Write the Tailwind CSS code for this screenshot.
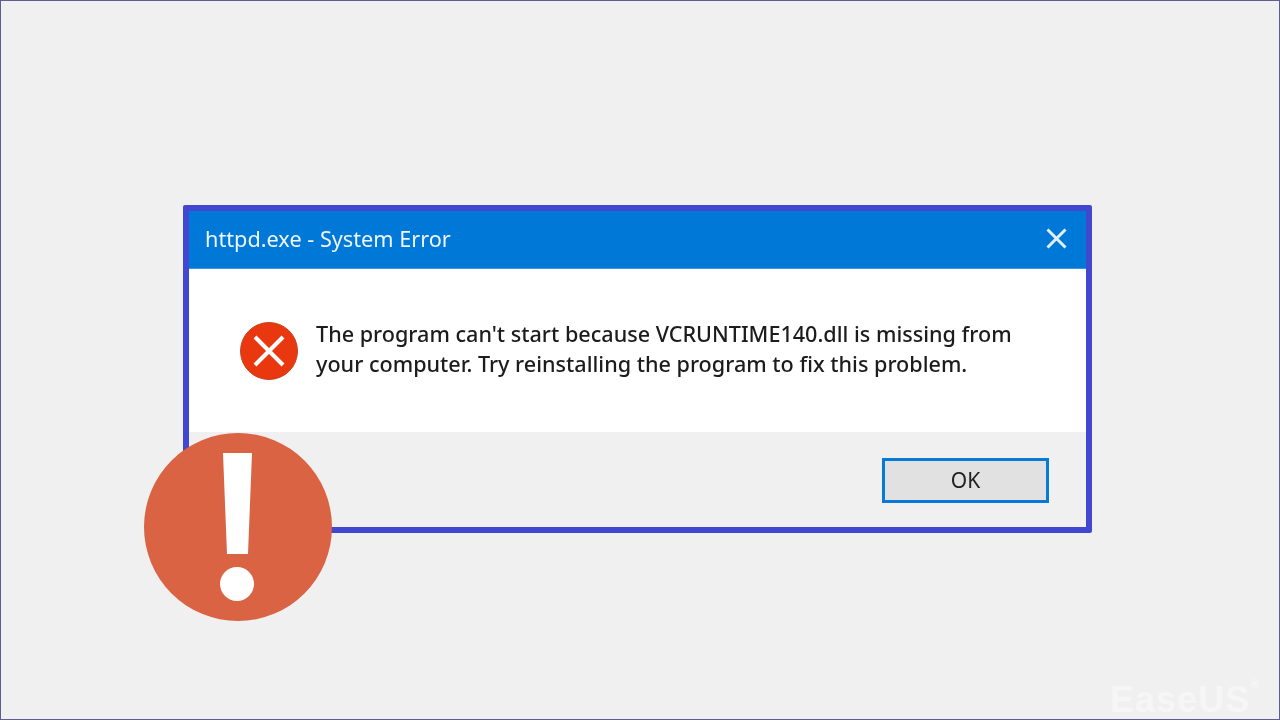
<!DOCTYPE html>
<html lang="en">
<head>
    <meta charset="UTF-8">
    <title>httpd.exe - System Error</title>
    <script src="https://cdn.jsdelivr.net/npm/@tailwindcss/browser@4"></script>
</head>
<body class="bg-[#f0f0f0] overflow-hidden">
    <div class="relative w-[1280px] h-[720px] border border-[#5b6090] font-['Noto_Sans','Open_Sans',sans-serif] pt-[204px] pl-[182px]">
        <!-- dialog -->
        <div class="w-[909px] h-[328px] border-[6px] border-[#4346cf] rounded-[2px] flex flex-col">
            <div class="h-[58px] bg-[#0078d7] flex items-center justify-between pl-[16px] pr-[19px] border-b border-[#3d97e0]">
                <span class="text-[21.700px] text-[#eef5fb] blur-[0.6px]">httpd.exe - System Error</span>
                <svg class="w-[21px] h-[21px] mb-[3px] blur-[0.6px]" viewBox="0 0 21 21" fill="none" stroke="#e4eff9" stroke-width="3">
                    <path d="M1.500 1.500 L19.500 19.500 M19.500 1.500 L1.500 19.500"/>
                </svg>
            </div>
            <div class="h-[163px] bg-white flex items-center pl-[51px]">
                <svg class="w-[58px] h-[58px] shrink-0 blur-[0.5px]" viewBox="0 0 58 58" fill="none">
                    <circle cx="29" cy="29" r="28.500" fill="#e9380f" stroke="#c9431f"/>
                    <path d="M15 15 L43 43 M43 15 L15 43" stroke="#fff" stroke-width="4"/>
                </svg>
                <p class="ml-[18px] mb-[4px] text-[21.600px] leading-[30px] whitespace-nowrap font-medium text-[#1c1c1c] blur-[0.6px]">The program can't start because VCRUNTIME140.dll is missing from<br>your computer. Try reinstalling the program to fix this problem.</p>
            </div>
            <div class="flex-1 bg-[#f0f0f0] flex justify-end items-start pt-[26px] pr-[37px]">
                <button class="w-[167px] h-[45px] bg-[#e1e1e1] border-[3px] border-[#0a78d6] text-[21px] text-[#222] blur-[0.5px]">OK</button>
            </div>
        </div>

        <!-- warning badge -->
        <svg class="absolute left-[143px] top-[432px] w-[188px] h-[188px]" viewBox="0 0 188 188">
            <circle cx="94" cy="94" r="94" fill="#d96343"/>
            <path d="M79 20 H108 L104 121 H83 Z" fill="#fff"/>
            <circle cx="93" cy="151" r="17" fill="#fff"/>
        </svg>

        <!-- watermark -->
        <div class="absolute right-[20px] bottom-[-1px] flex items-start text-[#f6f6f6] font-['Liberation_Sans',sans-serif] font-bold blur-[0.5px]">
            <span class="text-[36px] leading-[40px] tracking-[1px]">EaseUS</span>
            <span class="text-[12px] leading-[14px] mt-[-3px] text-[#f7f7f7]">®</span>
        </div>
    </div>
</body>
</html>
